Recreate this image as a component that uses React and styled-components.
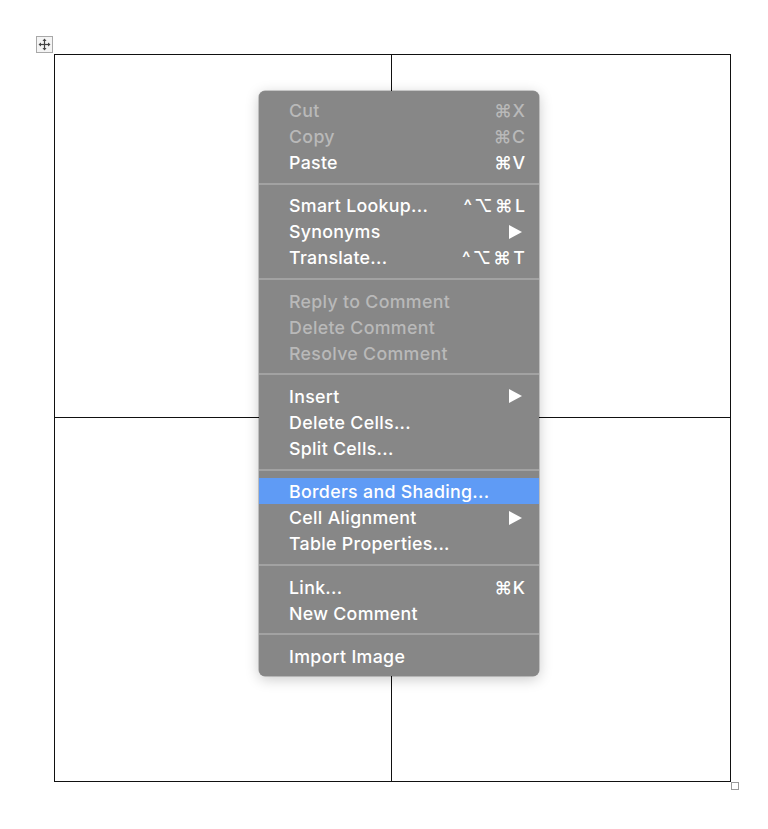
import React from "react";
import styled, { createGlobalStyle } from "styled-components";

const Global = createGlobalStyle`
  html, body { margin: 0; padding: 0; background: #ffffff; }
  body { font-family: Inter, "DejaVu Sans", sans-serif; }
`;

const Page = styled.div`
  position: relative;
  width: 768px;
  height: 829px;
  box-sizing: border-box;
  padding: 36px 0 0 36px;
  display: grid;
  grid-template-columns: 18px 677px 9px;
  grid-template-rows: 18px 728px 9px;
`;

const MoveHandle = styled.div`
  grid-column: 1;
  grid-row: 1;
  width: 17px;
  height: 17px;
  box-sizing: border-box;
  border: 1px solid #a8a8a8;
  background: #f4f4f4;
  display: flex;
  align-items: center;
  justify-content: center;
`;

const ResizeHandle = styled.div`
  grid-column: 3;
  grid-row: 3;
  width: 8px;
  height: 8px;
  box-sizing: border-box;
  border: 1px solid #9a9a9a;
  background: #fff;
`;

const Table = styled.div`
  grid-column: 2;
  grid-row: 2;
  display: grid;
  grid-template-columns: 337px 339px;
  grid-template-rows: 363px 364px;
  border-top: 1px solid #111;
  border-left: 1px solid #111;
`;

const Cell = styled.div`
  border-right: 1px solid #111;
  border-bottom: 1px solid #111;
`;

const Menu = styled.div`
  position: absolute;
  left: 259px;
  top: 91px;
  width: 280px;
  height: 585px;
  box-sizing: border-box;
  padding: 6px 0 0 0;
  background: #878787;
  border-radius: 6px;
  box-shadow: 0 0 0 0.5px rgba(0, 0, 0, 0.35), 0 3px 14px rgba(0, 0, 0, 0.22);
  display: flex;
  flex-direction: column;
`;

const Item = styled.div`
  height: 26px;
  flex: none;
  display: flex;
  align-items: center;
  justify-content: space-between;
  padding: 1px 14px 0 30px;
  box-sizing: border-box;
  font-family: Inter, "DejaVu Sans", sans-serif;
  font-size: 17.8px;
  font-weight: 500;
  letter-spacing: 0.3px;
  color: ${(p) => (p.$disabled ? "#b9b9b9" : "#ffffff")};
  background: ${(p) => (p.$active ? "#5f9bf5" : "transparent")};
`;

const Shortcut = styled.span`
  font-family: Inter, "DejaVu Sans", sans-serif;
  letter-spacing: ${(p) => (p.$wide ? "2.4px" : "0.6px")};
  margin-right: ${(p) => (p.$wide ? "-2.4px" : "-0.6px")};
`;

const Arrow = styled.svg`
  width: 13px;
  height: 14px;
  margin-right: 3px;
`;

const Separator = styled.div`
  flex: none;
  height: 17.33px;
  display: flex;
  align-items: center;
  &::after {
    content: "";
    display: block;
    width: 100%;
    height: 2px;
    background: #a2a2a2;
  }
`;

const sections = [
  [
    { label: "Cut", sc: "⌘X", disabled: true },
    { label: "Copy", sc: "⌘C", disabled: true },
    { label: "Paste", sc: "⌘V" },
  ],
  [
    { label: "Smart Lookup...", sc: "^⌥⌘L" },
    { label: "Synonyms", arrow: true },
    { label: "Translate...", sc: "^⌥⌘T" },
  ],
  [
    { label: "Reply to Comment", disabled: true },
    { label: "Delete Comment", disabled: true },
    { label: "Resolve Comment", disabled: true },
  ],
  [
    { label: "Insert", arrow: true },
    { label: "Delete Cells..." },
    { label: "Split Cells..." },
  ],
  [
    { label: "Borders and Shading...", active: true },
    { label: "Cell Alignment", arrow: true },
    { label: "Table Properties..." },
  ],
  [
    { label: "Link...", sc: "⌘K" },
    { label: "New Comment" },
  ],
  [{ label: "Import Image" }],
];

function MoveIcon() {
  return (
    <svg width="13" height="13" viewBox="0 0 13 13">
      <g stroke="#444" strokeWidth="1.2" fill="none">
        <line x1="6.5" y1="1.5" x2="6.5" y2="11.5" />
        <line x1="1.5" y1="6.5" x2="11.5" y2="6.5" />
      </g>
      <g fill="#444">
        <polygon points="6.5,0.5 4.5,3 8.5,3" />
        <polygon points="6.5,12.5 4.5,10 8.5,10" />
        <polygon points="0.5,6.5 3,4.5 3,8.5" />
        <polygon points="12.5,6.5 10,4.5 10,8.5" />
      </g>
    </svg>
  );
}

export default function App() {
  return (
    <>
      <Global />
      <Page>
        <MoveHandle>
          <MoveIcon />
        </MoveHandle>
        <Table>
          <Cell />
          <Cell />
          <Cell />
          <Cell />
        </Table>
        <ResizeHandle />
        <Menu>
          {sections.map((sec, i) => (
            <React.Fragment key={i}>
              {i > 0 && <Separator />}
              {sec.map((it) => (
                <Item key={it.label} $disabled={it.disabled} $active={it.active}>
                  <span>{it.label}</span>
                  {it.sc && <Shortcut $wide={it.sc.length > 2}>{it.sc}</Shortcut>}
                  {it.arrow && (
                    <Arrow viewBox="0 0 13 14">
                      <polygon points="0,0 13,7 0,14" fill="#ffffff" />
                    </Arrow>
                  )}
                </Item>
              ))}
            </React.Fragment>
          ))}
        </Menu>
      </Page>
    </>
  );
}
